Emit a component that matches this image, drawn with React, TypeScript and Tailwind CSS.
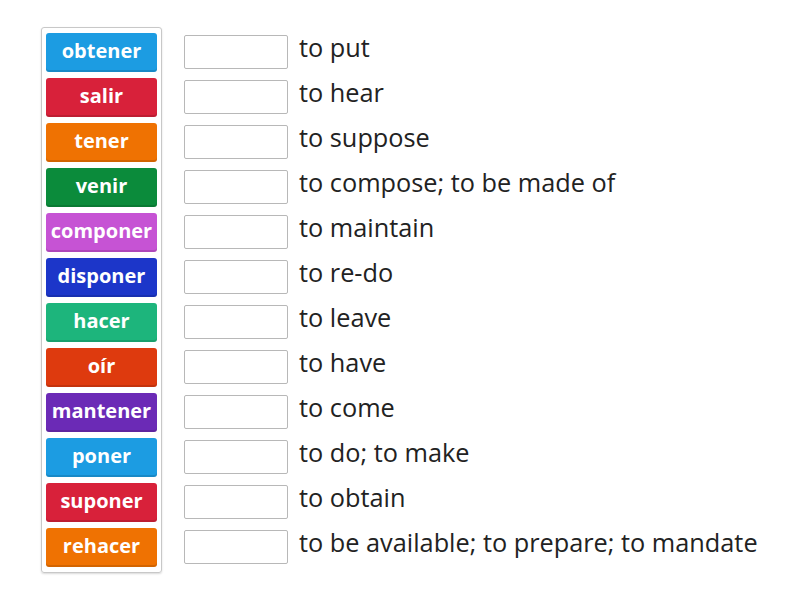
import React from "react";

const words: { w: string; c: string }[] = [
  { w: "obtener", c: "bg-[#1c9ce2]" },
  { w: "salir", c: "bg-[#d8213a]" },
  { w: "tener", c: "bg-[#ef7202]" },
  { w: "venir", c: "bg-[#0b8b3b]" },
  { w: "componer", c: "bg-[#c653d4]" },
  { w: "disponer", c: "bg-[#1c36c9]" },
  { w: "hacer", c: "bg-[#1db57c]" },
  { w: "oír", c: "bg-[#de3a0e]" },
  { w: "mantener", c: "bg-[#6b2ab6]" },
  { w: "poner", c: "bg-[#1c9ce2]" },
  { w: "suponer", c: "bg-[#d8213a]" },
  { w: "rehacer", c: "bg-[#ef7202]" },
];

const defs = [
  "to put",
  "to hear",
  "to suppose",
  "to compose; to be made of",
  "to maintain",
  "to re-do",
  "to leave",
  "to have",
  "to come",
  "to do; to make",
  "to obtain",
  "to be available; to prepare; to mandate",
];

export default function App() {
  return (
    <div
      className="w-[800px] h-[600px] bg-white flex pl-[41px] pt-[27px]"
      style={{ fontFamily: '"Open Sans", sans-serif' }}
    >
      <div className="w-[121px] h-[546px] border border-[#c8c8c8] rounded-[3px] px-[4px] pt-[5px] flex flex-col gap-[6px] shadow-[0_1px_2px_rgba(0,0,0,0.15)]">
        {words.map((x) => (
          <div
            key={x.w}
            className={`${x.c} h-[39px] pb-[4px] rounded-[3px] flex items-center justify-center text-white font-bold text-[20px] leading-none shadow-[inset_0_-2px_0_rgba(0,0,0,0.12)]`}
          >
            {x.w}
          </div>
        ))}
      </div>
      <div className="ml-[22px] pt-[8px] flex flex-col gap-[11px]">
        {defs.map((d) => (
          <div key={d} className="flex items-start h-[34px]">
            <div className="w-[104px] h-[34px] border border-[#b8b8b8] rounded-[2px] bg-white" />
            <div className="ml-[11px] text-[25.3px] text-[#222] leading-none whitespace-nowrap">{d}</div>
          </div>
        ))}
      </div>
    </div>
  );
}
